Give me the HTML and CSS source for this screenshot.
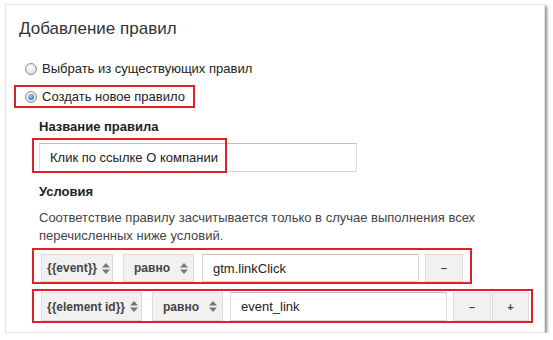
FILE: index.html
```html
<!DOCTYPE html>
<html lang="ru">
<head>
    <meta charset="UTF-8">
    <meta name="viewport" content="width=device-width, initial-scale=1.0">
    <title>Добавление правил</title>
    <link rel="stylesheet" href="styles.css">
</head>
<body>
    <div class="panel">
        <h2 class="title">Добавление правил</h2>

        <label class="opt"><span class="radio"></span>Выбрать из существующих правил</label>
        <label class="opt opt-mark"><span class="radio checked"></span>Создать новое правило</label>

        <div class="rule">
            <h3 class="label">Название правила</h3>
            <div class="name-field">
                <input type="text" class="ipt ipt-name" value="Клик по ссылке О компании">
                <span class="mark"></span>
            </div>

            <h3 class="label label-cond">Условия</h3>
            <p class="desc">Соответствие правилу засчитывается только в случае выполнения всех перечисленных ниже условий.</p>

            <!-- первое условие -->
            <div class="cond cond-first">
                <div class="sel sel-event"><span>{{event}}</span><svg width="8" height="11" viewBox="0 0 8 11"><path d="M0 4.5L4 0L8 4.5Z M0 6.5L8 6.5L4 11Z" fill="#777"/></svg></div>
                <div class="sel sel-op"><span>равно</span><svg width="8" height="11" viewBox="0 0 8 11"><path d="M0 4.5L4 0L8 4.5Z M0 6.5L8 6.5L4 11Z" fill="#777"/></svg></div>
                <input type="text" class="ipt" value="gtm.linkClick">
                <button class="btn">–</button>
            </div>

            <!-- второе условие -->
            <div class="cond cond-second">
                <div class="sel sel-elem"><span>{{element id}}</span><svg width="8" height="11" viewBox="0 0 8 11"><path d="M0 4.5L4 0L8 4.5Z M0 6.5L8 6.5L4 11Z" fill="#777"/></svg></div>
                <div class="sel sel-op"><span>равно</span><svg width="8" height="11" viewBox="0 0 8 11"><path d="M0 4.5L4 0L8 4.5Z M0 6.5L8 6.5L4 11Z" fill="#777"/></svg></div>
                <input type="text" class="ipt" value="event_link">
                <button class="btn">–</button>
                <button class="btn">+</button>
            </div>
        </div>
    </div>
</body>
</html>
```

FILE: styles.css
```css
*{
    box-sizing:border-box;
}
body{
    margin:0;
    background:#fff;
    font-family:"Liberation Sans", Arial, sans-serif;
    color:#222;
}
.panel{
    margin:4px 0 0 5px;
    width:540px;
    height:329px;
    border:1px solid #e4e4e4;
    /* тень справа и снизу */
    box-shadow:2px 2px 3px rgba(0,0,0,0.45);
    padding:14px 0 0 13px;
}
.title{
    margin:0;
    font-size:17px;
    font-weight:normal;
    line-height:20px;
    color:#333;
}
.opt{
    display:flex;
    align-items:center;
    width:fit-content;
    margin:20px 0 0 6px;
    font-size:13px;
    line-height:20px;
}
/* красная рамка вокруг выбранного пункта */
.opt-mark{
    margin:6px 0 0 -5px;
    border:2px solid #dd2127;
    padding:0 8px 0 9px;
    line-height:19px;
}
.radio{
    flex:none;
    display:flex;
    align-items:center;
    justify-content:center;
    width:12px;
    height:12px;
    margin-right:5px;
    border-radius:50%;
    border:1px solid #8c8c8c;
    background:radial-gradient(circle at 40% 35%, #fff, #d4d4d4);
}
.radio.checked::after{
    content:"";
    width:6px;
    height:6px;
    border-radius:50%;
    background:radial-gradient(circle at 35% 35%, #8fd3ff, #1a5f9f);
}
.rule{
    margin-left:20px;
}
.label{
    margin:9px 0 0;
    font-size:13px;
    line-height:20px;
    font-weight:bold;
    color:#222;
}
.label-cond{
    margin-top:10px;
}
.name-field{
    position:relative;
    width:318px;
    margin-top:6px;
}
.ipt{
    display:block;
    height:28px;
    padding:0 10px;
    border:1px solid #d9d9d9;
    border-top-color:#c0c0c0;
    border-radius:0;
    background:#fff;
    font:13px "Liberation Sans", Arial, sans-serif;
    color:#222;
    outline:none;
}
.ipt-name{
    width:318px;
    height:29px;
}
/* пометка поверх поля */
.mark{
    position:absolute;
    left:-7px;
    top:-5px;
    width:195px;
    height:35px;
    border:2px solid #dd2127;
}
.desc{
    margin:7px 0 0;
    width:470px;
    font-size:13px;
    line-height:18px;
    color:#444;
}
.cond{
    display:flex;
    width:fit-content;
    margin-left:-7px;
    border:2px solid #dd2127;
}
.cond-first{
    margin-top:3px;
    padding:4px 7px 0 7px;
}
.cond-second{
    margin-top:5px;
    padding:1px 2px 0 7px;
}
.cond-second .sel,
.cond-second .ipt,
.cond-second .btn{
    height:29px;
}
.sel{
    display:flex;
    align-items:center;
    height:28px;
    padding:0 5px;
    border:1px solid #dcdcdc;
    background:#f1f1f1;
    font-size:12px;
    font-weight:bold;
    color:#444;
}
.sel span{
    flex:1;
    text-align:center;
    white-space:nowrap;
}
.sel svg{
    flex:none;
    margin-left:5px;
}
.sel-event{
    width:72px;
}
.sel-elem{
    width:101px;
}
.sel-op{
    width:71px;
    margin-left:10px;
}
.cond .ipt{
    width:217px;
    margin-left:8px;
}
.cond-second .ipt{
    margin-left:7px;
}
.btn{
    width:38px;
    height:28px;
    margin-left:6px;
    padding:0;
    border:1px solid #dcdcdc;
    border-radius:0;
    background:#f1f1f1;
    color:#444;
    font:bold 11px "Liberation Sans", Arial, sans-serif;
}
.btn + .btn{
    width:37px;
    margin-left:1px;
}
```
